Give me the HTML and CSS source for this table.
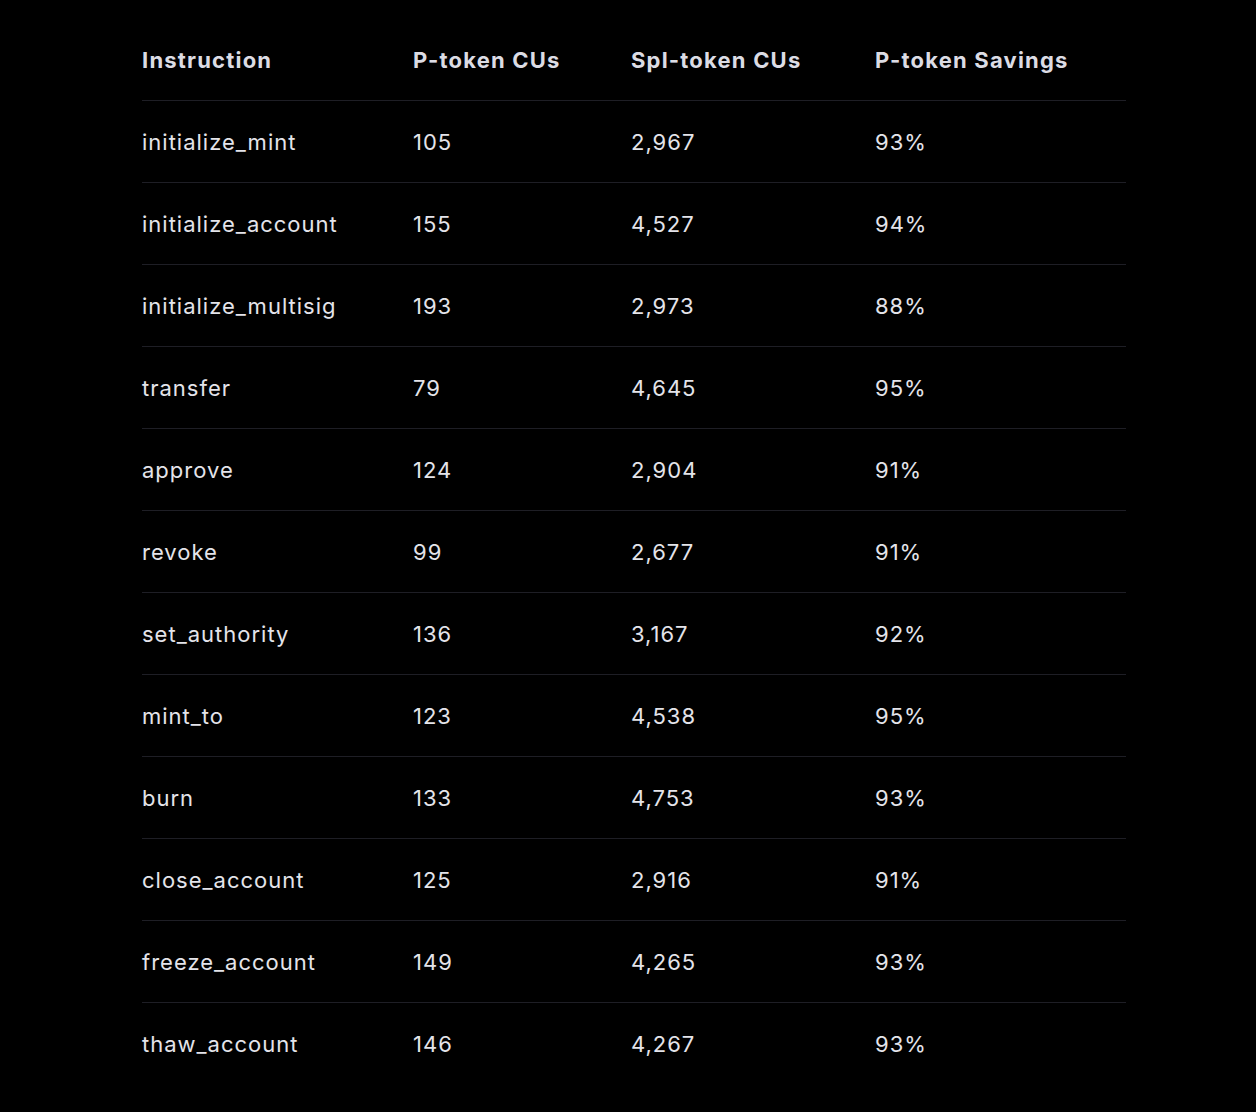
FILE: index.html
```html
<!DOCTYPE html>
<html>
<head>
<meta charset="utf-8">
<link rel="stylesheet" href="styles.css">
</head>
<body>
<div class="page">
  <div class="table">
    <div class="row head">
      <div>Instruction</div><div>P-token CUs</div><div>Spl-token CUs</div><div>P-token Savings</div>
    </div>
    <div class="row"><div>initialize_mint</div><div>105</div><div>2,967</div><div>93%</div></div>
    <div class="row"><div>initialize_account</div><div>155</div><div>4,527</div><div>94%</div></div>
    <div class="row"><div>initialize_multisig</div><div>193</div><div>2,973</div><div>88%</div></div>
    <div class="row"><div>transfer</div><div>79</div><div>4,645</div><div>95%</div></div>
    <div class="row"><div>approve</div><div>124</div><div>2,904</div><div>91%</div></div>
    <div class="row"><div>revoke</div><div>99</div><div>2,677</div><div>91%</div></div>
    <div class="row"><div>set_authority</div><div>136</div><div>3,167</div><div>92%</div></div>
    <div class="row"><div>mint_to</div><div>123</div><div>4,538</div><div>95%</div></div>
    <div class="row"><div>burn</div><div>133</div><div>4,753</div><div>93%</div></div>
    <div class="row"><div>close_account</div><div>125</div><div>2,916</div><div>91%</div></div>
    <div class="row"><div>freeze_account</div><div>149</div><div>4,265</div><div>93%</div></div>
    <div class="row last"><div>thaw_account</div><div>146</div><div>4,267</div><div>93%</div></div>
  </div>
</div>
</body>
</html>
```
FILE: styles.css
```css
html, body {
  margin: 0;
  padding: 0;
  background: #000;
}
.page {
  padding: 20px 0 0 142px;
}
.table {
  width: 984px;
  font-family: Inter, "Noto Sans", sans-serif;
  font-size: 22px;
  color: #e4e4ea;
}
.row {
  display: grid;
  grid-template-columns: 271px 218px 244px 1fr;
  align-items: center;
  height: 81px;
  border-bottom: 1px solid #1e1e25;
  letter-spacing: 1px;
}
.row.head {
  height: 80px;
  font-weight: 700;
  color: #dcdce4;
  letter-spacing: 1.2px;
}
.row.last {
  border-bottom: none;
}
```
